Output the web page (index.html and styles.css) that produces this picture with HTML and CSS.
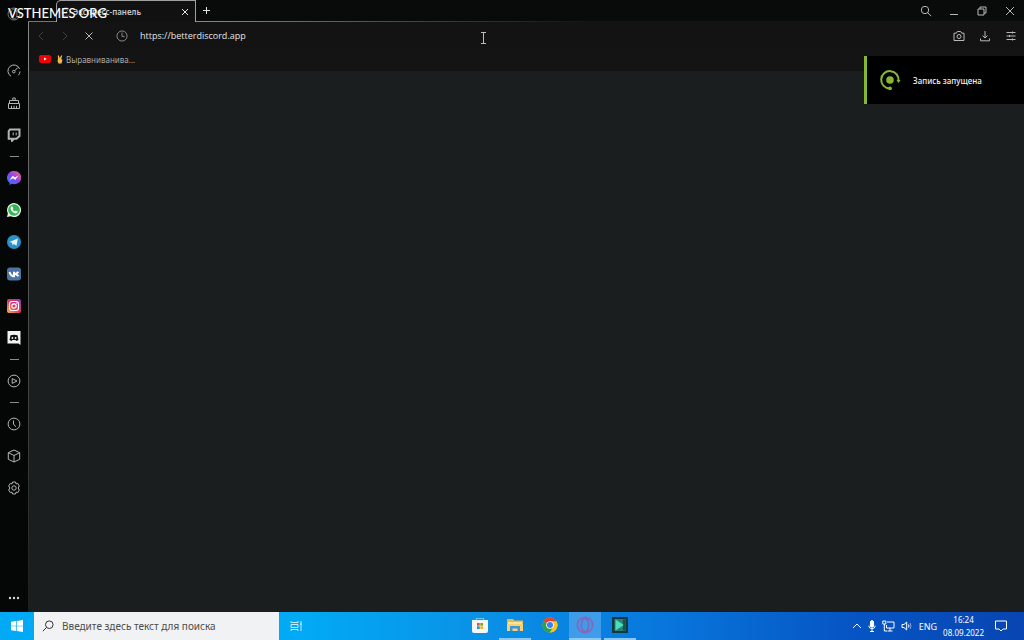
FILE: index.html
```html
<!DOCTYPE html>
<html lang="ru">
<head>
    <meta charset="UTF-8">
    <meta name="viewport" content="width=device-width, initial-scale=1.0">
    <title>Экспресс-панель</title>
    <link rel="stylesheet" href="styles.css">
</head>
<body>
    <div class="browser">
        <!-- Боковая панель -->
        <nav class="sidebar">
            <button class="opera-menu" aria-label="Меню">
                <svg width="14" height="14" viewBox="0 0 14 14"><circle cx="7" cy="7" r="6"/><ellipse cx="7" cy="7" rx="3" ry="5"/></svg>
            </button>
            <button aria-label="Экспресс-панель">
                <svg width="14" height="14" viewBox="0 0 14 14"><path d="M4 12.2A6 6 0 1 1 12.6 5M13 7.5a6 6 0 0 1-1.6 3.7"/><circle cx="6.8" cy="7.6" r="1.3"/><path d="M7.8 6.6l3-3"/></svg>
            </button>
            <button aria-label="Очистка">
                <svg width="14" height="14" viewBox="0 0 14 14"><path d="M5.8 4.5V2h2.4v2.5M2.5 7.5v-3h9v3M1.5 7.5h11v5h-11zM4.5 12V9.8M7 12V9.8M9.5 12V9.8"/></svg>
            </button>
            <button aria-label="Twitch">
                <svg width="14" height="14" viewBox="0 0 14 14"><path class="bold" d="M3 1.5h9.500v6.500l-3 2.700H7l-2 2v-2H1.700V3z"/><path d="M6.200 4.500v2.800M9.200 4.500v2.800"/></svg>
            </button>
            <hr>
            <button aria-label="Messenger">
                <svg class="brand" width="14" height="14" viewBox="0 0 14 14">
                    <defs><linearGradient id="messenger" x1="0" y1="1" x2="1" y2="0"><stop offset="0" stop-color="#1683ff"/><stop offset=".5" stop-color="#8b45ee"/><stop offset="1" stop-color="#ff6678"/></linearGradient></defs>
                    <path fill="url(#messenger)" d="M7 0a7 6.6 0 1 1-2.2 12.8L2.5 14v-2.3A6.6 6.6 0 0 1 7 0z"/><path fill="#fff" d="M2.5 9l3.300-4.200 2 1.700L11.500 4.500 8.200 8.900l-2-1.700z"/>
                </svg>
            </button>
            <button aria-label="WhatsApp">
                <svg class="brand" width="14" height="14" viewBox="0 0 14 14"><path fill="#e5f5e8" d="M7 0a7 7 0 1 1-3.2 13.2L0 14l.9-3.6A7 7 0 0 1 7 0z"/><circle cx="7" cy="7" r="5.8" fill="#35b454"/><path fill="#fff" d="M4.2 3.600l1.200-.3.9 2-.7.9c.5 1 1.200 1.700 2.300 2.200l.9-.8 1.900.9c.1 1.300-1 2-2 1.900C6.200 10 3.600 7.500 3.500 5.200z"/></svg>
            </button>
            <button aria-label="Telegram">
                <svg class="brand" width="14" height="14" viewBox="0 0 14 14"><circle cx="7" cy="7" r="7" fill="#2a91c6"/><path fill="#e6f3fa" d="M2.3 7L10.800 3.600 9.500 10.700 6.800 9l-1.400 1.300-.3-2.500z"/></svg>
            </button>
            <button aria-label="ВКонтакте">
                <svg class="brand" width="14" height="14" viewBox="0 0 14 14"><rect width="14" height="13" y=".5" rx="3" fill="#4b73a3"/><path class="vk-mark" d="M2.5 5c.7 2.600 2 4.200 4.500 4.200V4.800M11.300 4.800C10.500 6.300 9.200 7 7.300 7c2 0 3.200.7 4.200 2.300"/></svg>
            </button>
            <button aria-label="Instagram">
                <svg class="brand" width="14" height="14" viewBox="0 0 14 14">
                    <defs><linearGradient id="insta" x1="0" y1="1" x2="1" y2="0"><stop offset="0" stop-color="#ffb44a"/><stop offset=".45" stop-color="#e83b5b"/><stop offset="1" stop-color="#9133c4"/></linearGradient></defs>
                    <rect width="14" height="14" rx="2" fill="url(#insta)"/><g fill="none" stroke="#fff" stroke-width="1.2"><rect x="2.5" y="2.5" width="9" height="9" rx="2.5"/><circle cx="7" cy="7" r="2.2"/></g><circle cx="9.8" cy="4.2" r=".6" fill="#fff"/>
                </svg>
            </button>
            <button aria-label="Discord">
                <svg class="brand" width="14" height="14" viewBox="0 0 14 14"><path fill="#f2f2f2" d="M.5 0h13v14l-2-1.500H.5z"/><path fill="#111" d="M3.500 4.300Q7 3 10.500 4.300l1 4.700-2.200 1-.8-1h-3l-.8 1-2.200-1z"/><circle cx="5.4" cy="7" r=".9" fill="#f2f2f2"/><circle cx="8.6" cy="7" r=".9" fill="#f2f2f2"/></svg>
            </button>
            <hr>
            <button aria-label="Плеер">
                <svg width="14" height="14" viewBox="0 0 14 14"><circle cx="7" cy="7" r="5.9"/><path d="M5.200 4.600L10 7 5.200 9.400z"/></svg>
            </button>
            <hr>
            <button aria-label="История">
                <svg width="14" height="14" viewBox="0 0 14 14"><circle cx="7" cy="7" r="5.9"/><path d="M6.500 3.500V7l2.300 2.800"/></svg>
            </button>
            <button aria-label="Расширения">
                <svg width="14" height="14" viewBox="0 0 14 14"><path d="M7 1l5.700 2.700v6.600L7 13l-5.700-2.700V3.700zM1.300 3.700L7 6.500l5.700-2.800M7 6.500V13"/></svg>
            </button>
            <button aria-label="Настройки">
                <svg width="14" height="14" viewBox="0 0 14 14"><path d="M5.500 1h3l.5 1.800 1.800-.3 1.500 2.500L11.200 7l1.100 2-1.500 2.500-1.800-.3-.5 1.800h-3L5 11.200l-1.800.3L1.700 9l1.100-2-1.100-2 1.500-2.500 1.800.3z"/><circle cx="7" cy="7" r="2.2"/></svg>
            </button>
            <button class="more" aria-label="Ещё">
                <svg class="brand" width="14" height="14" viewBox="0 0 14 14"><g fill="#d4d4d4"><circle cx="3" cy="7" r="1.2"/><circle cx="7" cy="7" r="1.2"/><circle cx="11" cy="7" r="1.2"/></g></svg>
            </button>
        </nav>

        <div class="main">
            <!-- Вкладки -->
            <header class="tab-bar">
                <div class="tab-gap"></div>
                <div class="tab">
                    <svg width="10" height="10" viewBox="0 0 14 14"><circle cx="7" cy="7" r="5.9"/><path d="M7 7l3-3"/></svg>
                    <span class="tab-title">Экспресс-панель</span>
                    <button aria-label="Закрыть вкладку"><svg width="8" height="8" viewBox="0 0 8 8"><path d="M1 1l6 6M7 1L1 7"/></svg></button>
                </div>
                <div class="tab-rest">
                    <button class="new-tab" aria-label="Новая вкладка"><svg width="9" height="9" viewBox="0 0 9 9"><path d="M4.500 1v7M1 4.500h7"/></svg></button>
                    <div class="window-buttons">
                        <button aria-label="Поиск вкладок"><svg width="12" height="12" viewBox="0 0 12 12"><circle cx="5" cy="5" r="3.7"/><path d="M7.700 7.700l3.500 3.500"/></svg></button>
                        <button aria-label="Свернуть"><svg width="10" height="12" viewBox="0 0 10 12"><path d="M1 9.500h8"/></svg></button>
                        <button aria-label="Развернуть"><svg width="10" height="10" viewBox="0 0 10 10"><path d="M1 3h6v6H1zM3 3V1h6v6H7"/></svg></button>
                        <button aria-label="Закрыть"><svg width="10" height="10" viewBox="0 0 10 10"><path d="M1 1l8 8M9 1L1 9"/></svg></button>
                    </div>
                </div>
            </header>

            <!-- Адресная строка -->
            <div class="toolbar">
                <button class="dim" aria-label="Назад"><svg width="10" height="10" viewBox="0 0 10 10"><path d="M7 1L3 5l4 4"/></svg></button>
                <button class="dim" aria-label="Вперёд"><svg width="10" height="10" viewBox="0 0 10 10"><path d="M3 1l4 4-4 4"/></svg></button>
                <button aria-label="Остановить"><svg width="8" height="8" viewBox="0 0 8 8"><path d="M.5.5l7 7M7.5.5l-7 7"/></svg></button>
                <svg class="site-icon" width="12" height="12" viewBox="0 0 14 14"><circle cx="7" cy="7" r="5.9"/><path d="M7 3v4.500h3"/></svg>
                <input class="address" type="text" value="https://betterdiscord.app" aria-label="Адрес">
                <div class="actions">
                    <button aria-label="Снимок"><svg width="12" height="12" viewBox="0 0 12 12"><path d="M1 3.200h2.300L4.300 1.500h3.400l1 1.700H11v7.300H1z"/><circle cx="6" cy="6.5" r="2"/></svg></button>
                    <button aria-label="Загрузки"><svg width="12" height="12" viewBox="0 0 12 12"><path d="M6 1v7M3.500 5.500L6 8l2.500-2.500M1.500 8.500v2.300h9V8.500"/></svg></button>
                    <button aria-label="Настройка"><svg width="10" height="10" viewBox="0 0 10 10"><path d="M.5 1.500h9M.5 5h9M.5 8.500h9M6.500.5v2M3.500 4v2M6.500 7.500v2"/></svg></button>
                </div>
            </div>

            <div class="bookmarks">
                <a href="#">
                    <svg width="12" height="8" viewBox="0 0 12 8"><rect width="12" height="8" rx="2" fill="#f00008"/><path d="M5 2.500v3L7.700 4z" fill="#fff"/></svg>
                    <svg width="6" height="9" viewBox="0 0 6 9"><path d="M1 4L.8.5 2 .4l.7 2.800L4.300.3l.9.4L4.300 4 5.500 5 4.500 8.500h-3L.5 6z" fill="#f1b74c"/></svg>
                    <span>Выравниванива...</span>
                </a>
            </div>

            <main class="page"></main>
        </div>
    </div>

    <!-- Панель задач -->
    <footer class="taskbar">
        <button class="start" aria-label="Пуск">
            <svg width="12" height="12" viewBox="0 0 12 12"><path fill="#fff" d="M0 1.700l5-.7v4.700H0zM5.700.9L12 0v5.700H5.700zM0 6.300h5V11l-5-.7zM5.700 6.300H12V12l-6.300-.9z"/></svg>
        </button>
        <label class="search">
            <svg width="12" height="12" viewBox="0 0 12 12"><circle cx="7.3" cy="4.7" r="3.8"/><path d="M4.600 7.400L.8 11.200"/></svg>
            <input type="text" placeholder="Введите здесь текст для поиска" aria-label="Поиск">
        </label>
        <button class="task-view" aria-label="Представление задач">
            <svg width="13" height="12" viewBox="0 0 13 12"><path d="M1 1v1.500h7V1M1 4.500h7v3H1zM1 11V9.500h7V11M11 1v10M10 4h2"/></svg>
        </button>
        <div class="apps">
            <button aria-label="Магазин">
                <svg width="18" height="16" viewBox="0 0 18 16"><path d="M5 4V1.500h8V4" fill="none" stroke="#6cc8f5"/><path d="M1 3h16v11q0 2-2 2H3q-2 0-2-2z" fill="#f4f6f7"/><path d="M6 6h2.700v2.700H6z" fill="#e8502c"/><path d="M9.300 6H12v2.700H9.300z" fill="#70a928"/><path d="M6 9.300h2.700V12H6z" fill="#1597d8"/><path d="M9.300 9.300H12V12H9.300z" fill="#f5b41d"/></svg>
            </button>
            <button class="running" aria-label="Проводник">
                <svg width="16" height="14" viewBox="0 0 16 14"><path d="M0 1h6l1.500 1.500H16V13H0z" fill="#e9b84b"/><path d="M1 4h14v4H1z" fill="#ffe49a"/><path d="M0 6h16v7H0z" fill="#f8d272"/><path d="M3 13V8h10v5h-2.500v-2.500h-5V13z" fill="#3a97d8"/></svg>
            </button>
            <button aria-label="Chrome">
                <svg width="16" height="16" viewBox="0 0 16 16"><circle cx="8" cy="8" r="7.5" fill="#f7c51e"/><path d="M8 8L1.500 4.200A7.500 7.500 0 0 1 14.500 4.200z" fill="#e64132"/><path d="M8 8L1.500 4.200A7.500 7.500 0 0 0 8 15.500l3.200-5.600z" fill="#2ca14c"/><path d="M8 4.200h6.500A7.500 7.500 0 0 1 8 15.500l3.200-5.600z" fill="#f7c51e"/><circle cx="8" cy="8" r="3.8" fill="#fff"/><circle cx="8" cy="8" r="3" fill="#3d7ff0"/></svg>
            </button>
            <button class="running active" aria-label="Opera GX">
                <svg width="18" height="18" viewBox="0 0 18 18"><g stroke="#8468bd" stroke-width="1.7"><circle cx="9" cy="9" r="7.7"/><ellipse cx="9" cy="9" rx="3.7" ry="6.7"/></g></svg>
            </button>
            <button class="running" aria-label="Filmora">
                <svg width="16" height="16" viewBox="0 0 16 16"><path d="M0 0h16v16H0z" fill="#123a3b"/><path d="M2.500 2h11v12h-11z" fill="#287f78"/><path d="M3.500 2.500L12 8l-8.500 5.500z" fill="#49dfb9"/><path d="M12 2.500v11" stroke="#092326"/></svg>
            </button>
        </div>
        <div class="tray">
            <button aria-label="Скрытые значки"><svg width="10" height="10" viewBox="0 0 10 10"><path d="M1 7l4-4 4 4"/></svg></button>
            <svg width="8" height="12" viewBox="0 0 8 12"><path class="mic" d="M2.500 1.500q1.500-2 3 0v5q-1.500 1.500-3 0z"/><path d="M1 5.500v1Q1 8.500 4 8.500T7 6.500v-1M4 8.500v3M2 11.500h4"/></svg>
            <svg width="13" height="12" viewBox="0 0 13 12"><path d="M5 2h7v6H4.500V5M8 8v3M5.500 11h5M.8 1h3v3h-3zM2.300 4v7H5"/></svg>
            <svg width="12" height="12" viewBox="0 0 12 12"><path d="M1 4.500h2L5.700 2v8L3 7.500H1zM7.500 4.500q1 1.500 0 3"/><path opacity=".5" d="M9 3q2 3 0 6"/></svg>
            <span>ENG</span>
            <time class="clock" datetime="2022-09-08T16:24"><span>16:24</span><span>08.09.2022</span></time>
            <button class="notify" aria-label="Уведомления"><svg width="12" height="12" viewBox="0 0 12 12"><path d="M.5 1h11v8H8L6 11 4 9H.5z"/></svg></button>
        </div>
    </footer>

    <!-- Поверх окна -->
    <div class="watermark">VSTHEMES ORG</div>
    <div class="toast" role="status">
        <svg width="22" height="22" viewBox="0 0 22 22"><circle cx="11" cy="11" r="3.8" fill="#86b933"/><path d="M19.500 12A8.700 8.700 0 1 0 11 19.500" fill="none" stroke="#86b933" stroke-width="2"/><path d="M17.500 11h4l-2 3z" fill="#86b933"/><circle cx="11" cy="19.3" r="1.9" fill="#86b933"/></svg>
        <span>Запись запущена</span>
    </div>
    <svg class="cursor" width="7" height="12" viewBox="0 0 7 12"><path d="M1 .5h5M3.500.5v11M1 11.500h5"/></svg>
</body>
</html>
```
FILE: styles.css
```css
* {
    box-sizing: border-box;
}

body {
    margin: 0;
    height: 100vh;
    display: flex;
    flex-direction: column;
    overflow: hidden;
    background-color: #080b09;
    color: #e4e4e4;
    font-family: "Noto Sans", "Open Sans", sans-serif;
    font-size: 9px;
}

button {
    display: flex;
    align-items: center;
    justify-content: center;
    padding: 0;
    border: none;
    background: none;
    color: inherit;
}

input {
    border: none;
    padding: 0;
    background: none;
    font-family: inherit;
    outline: none;
}

svg {
    flex: none;
    fill: none;
    stroke: currentColor;
}

svg.brand,
.bookmarks svg,
.start svg,
.apps svg,
.toast svg {
    stroke: none;
}

.browser {
    flex: 1;
    min-height: 0;
    display: flex;
}

/* Боковая панель */
.sidebar {
    width: 28px;
    display: flex;
    flex-direction: column;
    background-color: #050706;
    color: #b4b4b4;
}

.sidebar button {
    height: 32px;
}

.sidebar .bold {
    stroke-width: 2;
}

.sidebar .vk-mark {
    stroke: #fff;
    stroke-width: 2;
}

.sidebar hr {
    width: 9px;
    height: 1px;
    margin: 5px auto;
    border: none;
    background-color: #8c8c8c;
}

.sidebar .opera-menu {
    height: 28px;
    margin-bottom: 27px;
    color: #777;
}

.sidebar .more {
    height: 28px;
    margin-top: auto;
}

.main {
    flex: 1;
    min-width: 0;
    display: flex;
    flex-direction: column;
}

/* Вкладки */
.tab-bar {
    height: 22px;
    display: flex;
}

.tab-gap {
    width: 28px;
    border-bottom: 1px solid #777;
}

.tab {
    width: 140px;
    display: flex;
    align-items: center;
    padding: 0 6px 0 4px;
    gap: 2px;
    border: 1px solid #a0a0a0;
    border-bottom: none;
    border-radius: 5px 0 0 0;
    background-color: #111;
}

.tab-title {
    flex: 1;
    color: #c8c8c8;
    font-size: 8px;
    font-weight: 600;
}

.tab > svg {
    color: #777;
}

.tab-rest {
    flex: 1;
    display: flex;
    justify-content: space-between;
    align-items: center;
    padding-left: 6px;
    border-bottom: 1px solid;
    border-image: linear-gradient(to right, #8a8a8a, #3a3a3a 30%, #151515 47%) 1;
}

.window-buttons {
    display: flex;
    color: #b8b8b8;
}

.window-buttons button {
    width: 28px;
}

/* Адресная строка */
.toolbar {
    height: 27px;
    display: flex;
    align-items: center;
    border-left: 1px solid #858585;
    background-color: #131313;
}

.toolbar button {
    width: 24px;
    height: 24px;
    color: #b8b8b8;
}

.toolbar .dim {
    color: #404040;
}

.site-icon {
    margin: 0 12px 0 15px;
    color: #999;
}

.address {
    flex: 1;
    color: #e4e4e4;
    font-family: "Open Sans", sans-serif;
    font-size: 9px;
}

.actions {
    display: flex;
    gap: 2px;
    padding-right: 1px;
}

.bookmarks {
    height: 22px;
    padding-left: 10px;
    border-left: 1px solid #858585;
    background-color: #141414;
}

.bookmarks a {
    display: inline-flex;
    align-items: center;
    gap: 3px;
    height: 20px;
    color: #aaa;
    font-size: 8px;
    text-decoration: none;
}

.bookmarks svg:first-child {
    margin-right: 3px;
}

.page {
    flex: 1;
    border-left: 1px solid;
    border-image: linear-gradient(#777, #3c3f3e 65%, #1a1e1e) 1;
    background-color: #1a1e1e;
}

/* Панель задач */
.taskbar {
    height: 28px;
    display: flex;
    background: linear-gradient(to right, #02a9f5 30%, #0a91e6 47%, #0876dc 65%, #0655c4 83%, #0845b2);
    color: #fff;
}

.start {
    width: 34px;
}

.search {
    width: 245px;
    display: flex;
    align-items: center;
    gap: 8px;
    padding-left: 8px;
    background-color: #f1f2f3;
    color: #333;
}

.search input {
    flex: 1;
    min-width: 0;
    font-size: 10px;
}

.search input::placeholder {
    color: #4c4c4c;
}

.task-view {
    width: 34px;
    color: #c4ecff;
}

.apps {
    display: flex;
    gap: 3px;
    margin-left: 151px;
}

.apps button {
    width: 32px;
    border-bottom: 2px solid transparent;
}

.apps .running {
    border-bottom-color: #8cc8f6;
}

.apps .active {
    background-color: #3f9ce8;
}

.tray {
    display: flex;
    align-items: center;
    gap: 6px;
    margin-left: auto;
    padding-right: 17px;
}

.tray .mic {
    fill: #fff;
}

.clock {
    display: flex;
    flex-direction: column;
    align-items: center;
    font-size: 8px;
    line-height: 13px;
}

.notify {
    margin-left: 5px;
}

/* Поверх окна */
.watermark {
    position: absolute;
    top: 4px;
    left: 8px;
    color: #fff;
    font-family: Lato, sans-serif;
    font-size: 13px;
    font-weight: 500;
    line-height: 18px;
}

.toast {
    position: absolute;
    top: 56px;
    right: 0;
    width: 160px;
    height: 48px;
    display: flex;
    align-items: center;
    gap: 12px;
    padding-left: 12px;
    border-left: 3px solid #86b933;
    background-color: #000;
    color: #f2f2f2;
    font-size: 8px;
    font-weight: 500;
}

.cursor {
    position: absolute;
    top: 32px;
    left: 480px;
    color: #bbb;
}
```
